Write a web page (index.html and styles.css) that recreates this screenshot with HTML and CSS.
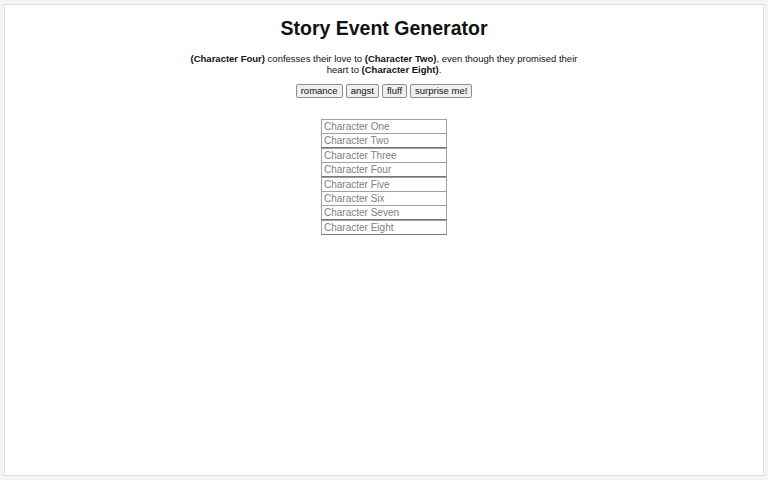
FILE: index.html
```html
<!DOCTYPE html>
<html>
<head>
<meta charset="utf-8">
<title>Story Event Generator</title>
<link rel="stylesheet" href="styles.css">
</head>
<body>
<main class="page">
  <h1 class="title">Story Event Generator</h1>
  <p class="prompt"><b>(Character Four)</b> confesses their love to <b>(Character Two)</b>, even though they promised their heart to <b>(Character Eight)</b>.</p>
  <div class="modes">
    <button class="mode">romance</button>
    <button class="mode">angst</button>
    <button class="mode">fluff</button>
    <button class="mode">surprise me!</button>
  </div>
  <form class="cast">
    <input class="name" placeholder="Character One">
    <input class="name" placeholder="Character Two">
    <input class="name" placeholder="Character Three">
    <input class="name" placeholder="Character Four">
    <input class="name" placeholder="Character Five">
    <input class="name" placeholder="Character Six">
    <input class="name" placeholder="Character Seven">
    <input class="name" placeholder="Character Eight">
  </form>
</main>
</body>
</html>
```
FILE: styles.css
```css
html {
  background: #f3f3f3;
}
body {
  margin: 4px;
  font-family: "Liberation Sans", Arial, sans-serif;
  color: #111;
}
.page {
  box-sizing: border-box;
  height: 472px;
  background: #fff;
  border: 1px solid #dcdcdc;
  display: flex;
  flex-direction: column;
  align-items: center;
  padding-top: 11px;
}
.title {
  margin: 0;
  font-size: 19.5px;
  line-height: 24px;
  font-weight: bold;
}
.prompt {
  margin: 13px 0 0;
  max-width: 400px;
  font-size: 9.5px;
  line-height: 11px;
  text-align: center;
}
.modes {
  display: flex;
  gap: 3px;
  margin-top: 9px;
}
.mode {
  font-family: inherit;
  font-size: 9.5px;
  line-height: 10px;
  padding: 1px 4px;
  background: #efefef;
  border: 1px solid #8f8f8f;
  border-radius: 2px;
  color: #111;
}
.cast {
  display: flex;
  flex-direction: column;
  margin-top: 21px;
}
.name {
  box-sizing: border-box;
  width: 126px;
  height: 15px;
  margin: 0 0 -0.6px;
  padding: 0 2px;
  font-family: inherit;
  font-size: 10px;
  border: 1px solid #a0a0a0;
  border-bottom-color: #777;
  border-radius: 0;
}
.name::placeholder {
  color: #808080;
}
```
